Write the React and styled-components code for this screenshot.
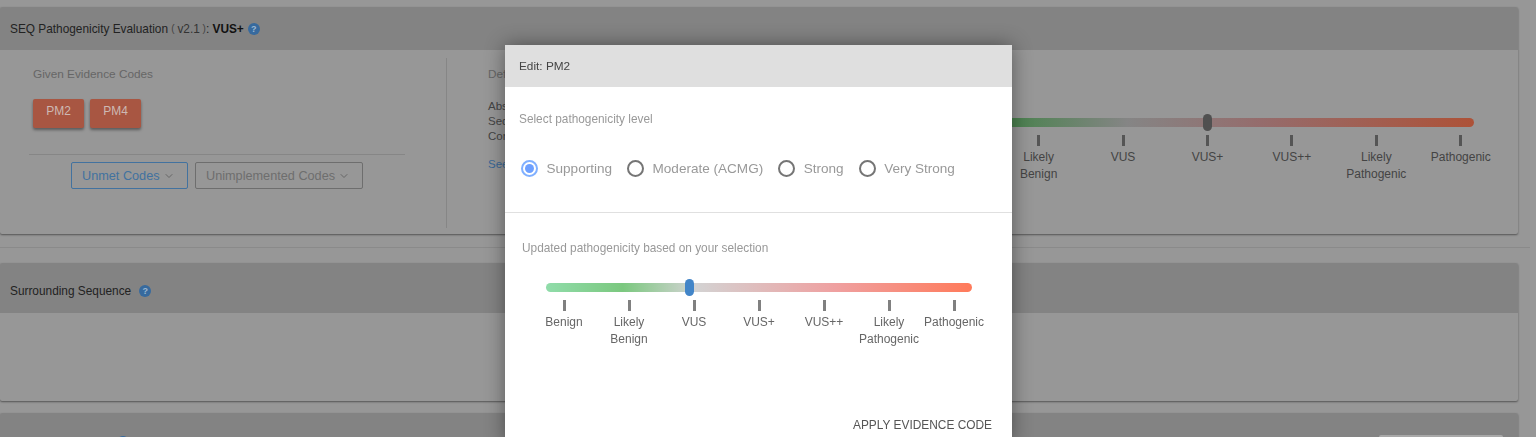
import React from "react";
import styled, { createGlobalStyle } from "styled-components";
import { ChevronDown } from "lucide-react";

const Global = createGlobalStyle`
  html, body { margin: 0; padding: 0; height: 437px; overflow: hidden; background: #979797; }
  body { font-family: "Liberation Sans", Arial, sans-serif; }
  * { box-sizing: border-box; }
`;

const Page = styled.div`
  width: 1536px; height: 437px; overflow: hidden; background: #979797; padding-top: 7px;
`;
const Card = styled.section`
  width: 1518px; background: #979797; border-radius: 2px;
  box-shadow: 0 1px 2px rgba(0,0,0,.45);
`;
const CardHeader = styled.header`
  height: ${p => p.$h}px; background: #838383; display: flex; align-items: center;
  padding: ${p => p.$pt || 0}px 15px 0 10px;
  font-size: 11.85px; color: #222; border-radius: 2px 2px 0 0;
  position: relative; white-space: pre;
`;
const Small = styled.span`
  font-size: 10px; color: #444;
`;
const Version = styled.span` color: #333; `;
const Strong = styled.strong` color: #111; `;
const Help = styled.span`
  width: 12px; height: 12px; border-radius: 50%; background: #376a9e; color: #9fb8d0;
  font-size: 9px; font-weight: bold; display: inline-flex; align-items: center; justify-content: center;
  margin-left: ${p => p.$ml}px; flex: none;
`;
const CardBody = styled.div`
  height: ${p => p.$h}px; display: flex; padding: 8px 0 6px;
`;
const LeftCol = styled.div`
  width: 447px; border-right: 1px solid #868686; padding: 9px 41px 0 29px;
`;
const SectionLabel = styled.div`
  font-size: 11.8px; color: #666; padding-left: ${p => p.$pl || 0}px; line-height: 14px;
`;
const Codes = styled.div`
  display: flex; gap: 6px; padding: 18px 0 26px 4px;
`;
const Code = styled.div`
  width: 51px; height: 29px; background: #a85642; color: #cdb9b3; font-size: 12px; border-radius: 2px;
  text-align: center; padding-top: 5px; box-shadow: 0 2px 3px rgba(0,0,0,.4);
`;
const Filters = styled.div`
  border-top: 1px solid #868686; display: flex; justify-content: center; gap: 7px; padding-top: 7px;
`;
const Filter = styled.div`
  height: 27px; display: flex; align-items: center; justify-content: space-between;
  padding: 0 ${p => p.$pr}px 0 10px; font-size: 12.7px; white-space: nowrap;
  border: 1px solid ${p => p.$c}; color: ${p => p.$c}; border-radius: 2px; width: ${p => p.$w}px;
  svg { color: #666; }
`;
const Middle = styled.div`
  width: 465px; padding: 9px 0 0 41px; font-size: 11.5px; color: #444; line-height: 15px;
`;
const Para = styled.p` margin: 18px 0 0; white-space: nowrap; `;
const MoreLink = styled.div` margin-top: 13px; color: #3a6896; `;

const ScaleHolder = styled.div` padding-top: 60px; flex: none; `;
const BlankBody = styled.div` height: 88px; `;

const Scale = styled.div`
  position: relative; width: ${p => p.$col * 7}px; flex: none;
`;
const Track = styled.div`
  height: 9px; margin: 0 ${p => p.$inset}px; border-radius: 5px;
  background: linear-gradient(90deg, ${p => p.$stops});
`;
const Thumb = styled.div`
  position: absolute; top: -4px; width: 9px; height: 17px; border-radius: 4.5px; background: ${p => p.$c};
`;
const Ticks = styled.div` display: flex; padding-top: 8px; `;
const Tick = styled.div`
  flex: 1; display: flex; flex-direction: column; align-items: center; font-size: 12px; line-height: 17px;
  color: ${p => p.$text}; text-align: center;
  &::before { content: ""; width: 3px; height: 11px; background: ${p => p.$mark}; margin-bottom: 3px; }
`;

const Rule = styled.div`
  width: 1530px; height: 1px; background: #8a8a8a; margin: 13px 0 15px;
`;
const Gap = styled.div` height: 12px; `;
const HeaderBtn = styled.div`
  position: absolute; right: 15px; top: 22px; width: 124px; height: 30px; background: #a8a8a8; border-radius: 2px;
`;

const Modal = styled.div`
  position: fixed; left: 505px; top: 45px; width: 507px; height: 400px; background: #fff;
  box-shadow: 0 0 20px rgba(0,0,0,.42); border-radius: 2px 2px 0 0;
`;
const ModalHeader = styled.div`
  height: 42px; background: #dfdfdf; padding: 0 14px; display: flex; align-items: center; font-size: 11.8px; color: #444;
`;
const ModalTop = styled.div`
  height: 126px; border-bottom: 1px solid #e0e0e0; padding: 25px 14px 0;
`;
const Hint = styled.div` font-size: 11.85px; color: #999; line-height: 14px; `;
const Radios = styled.div` display: flex; margin-top: 34px; padding-left: 2px; gap: 15px; `;
const Radio = styled.label`
  display: flex; align-items: center; gap: 8.5px; font-size: 13.55px; color: #999; line-height: 17px;
`;
const Dot = styled.span`
  width: 17px; height: 17px; border-radius: 50%; flex: none; background: #fff;
  border: 2px solid ${p => p.$on ? "#80b0ff" : "#757575"};
  display: flex; align-items: center; justify-content: center;
  &::after { content: ""; width: 9px; height: 9px; border-radius: 50%; background: ${p => p.$on ? "#6ea0ff" : "transparent"}; }
`;
const ModalBottom = styled.div` padding: 28px 0 0 17px; `;
const ScaleWrap = styled.div` padding: 28px 0 0 9.5px; `;
const Footer = styled.div`
  position: absolute; right: 20px; top: 373px; font-size: 11.9px; color: #555; line-height: 14px;
`;

const labels = ["Benign", ["Likely", "Benign"], "VUS", "VUS+", "VUS++", ["Likely", "Pathogenic"], "Pathogenic"];

function ScaleView({ col, inset, stops, thumbX, thumbColor, mark, text }) {
  return (
    <Scale $col={col}>
      <Track $inset={inset} $stops={stops} />
      <Thumb $c={thumbColor} style={{ left: thumbX }} />
      <Ticks>
        {labels.map((l, i) => (
          <Tick key={i} $mark={mark} $text={text}>
            {Array.isArray(l) ? l.map(x => <span key={x}>{x}</span>) : <span>{l}</span>}
          </Tick>
        ))}
      </Ticks>
    </Scale>
  );
}

export default function App() {
  return (
    <>
      <Global />
      <Page>
        <Card>
          <CardHeader $h={43}>
            SEQ Pathogenicity Evaluation <Small>( </Small><Version>v2.1</Version><Small> )</Small>: <Strong>VUS+</Strong>
            <Help $ml={4}>?</Help>
          </CardHeader>
          <CardBody $h={184}>
            <LeftCol>
              <SectionLabel $pl={4}>Given Evidence Codes</SectionLabel>
              <Codes>
                <Code>PM2</Code>
                <Code>PM4</Code>
              </Codes>
              <Filters>
                <Filter $c="#42729f" $w={117} $pr={12}>Unmet Codes <ChevronDown size={12} /></Filter>
                <Filter $c="#6e6e6e" $w={168} $pr={12}>Unimplemented Codes <ChevronDown size={12} /></Filter>
              </Filters>
            </LeftCol>
            <Middle>
              <SectionLabel>Definition</SectionLabel>
              <Para>Absent from controls<br />Sequence<br />Consequence</Para>
              <MoreLink>See more</MoreLink>
            </Middle>
            <ScaleHolder>
              <ScaleView col={84.43} inset={29} thumbX={291}
                stops="#5a8f5f 0%, #4c8250 14%, #858585 35%, #956c6c 60%, #ad5238 100%"
                thumbColor="#505050" mark="#555" text="#444" />
            </ScaleHolder>
          </CardBody>
        </Card>
        <Rule />
        <Card>
          <CardHeader $h={50} $pt={5}>Surrounding Sequence<Help $ml={8}>?</Help></CardHeader>
          <BlankBody />
        </Card>
        <Gap />
        <Card>
          <CardHeader $h={58}><Help $ml={107} /><HeaderBtn /></CardHeader>
        </Card>
      </Page>
      <Modal>
        <ModalHeader>Edit: PM2</ModalHeader>
        <ModalTop>
          <Hint>Select pathogenicity level</Hint>
          <Radios>
            <Radio><Dot $on />Supporting</Radio>
            <Radio><Dot />Moderate (ACMG)</Radio>
            <Radio><Dot />Strong</Radio>
            <Radio><Dot />Very Strong</Radio>
          </Radios>
        </ModalTop>
        <ModalBottom>
          <Hint>Updated pathogenicity based on your selection</Hint>
          <ScaleWrap>
            <ScaleView col={65} inset={14.5} thumbX={153.5}
              stops="#90dcaa 0%, #7bc87f 18%, #d3d3d3 35%, #efa0a0 68%, #ff7a5a 100%"
              thumbColor="#4285c8" mark="#808080" text="#666" />
          </ScaleWrap>
        </ModalBottom>
        <Footer>APPLY EVIDENCE CODE</Footer>
      </Modal>
    </>
  );
}
